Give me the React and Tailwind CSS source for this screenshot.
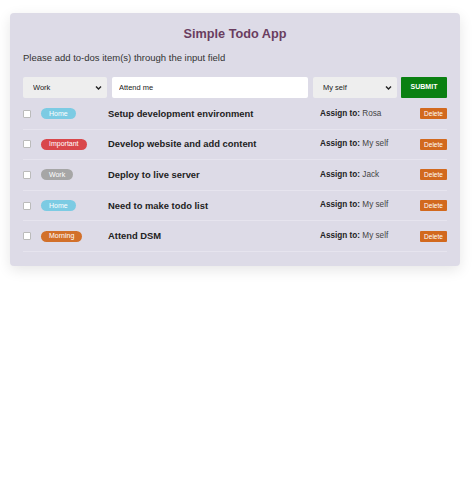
import { useState } from 'react';

const BADGE_STYLES = {
    Home: 'bg-[#7ccbe3]',
    Important: 'bg-[#d9474b]',
    Work: 'bg-[#a6a6a6]',
    Morning: 'bg-[#d2702a]',
};

const TODOS = [
    { id: 1, tag: 'Home', text: 'Setup development environment', assignee: 'Rosa' },
    { id: 2, tag: 'Important', text: 'Develop website and add content', assignee: 'My self' },
    { id: 3, tag: 'Work', text: 'Deploy to live server', assignee: 'Jack' },
    { id: 4, tag: 'Home', text: 'Need to make todo list', assignee: 'My self' },
    { id: 5, tag: 'Morning', text: 'Attend DSM', assignee: 'My self' },
];

function Chevron() {
    return (
        <svg className="pointer-events-none absolute right-[5px] top-1/2 -translate-y-1/2" width="7" height="5" viewBox="0 0 7 5">
            <path d="M1 1l2.5 2.5L6 1" fill="none" stroke="#222" strokeWidth="1.4" />
        </svg>
    );
}

function SelectBox({ value, options, onChange, className }) {
    return (
        <div className={`relative ${className}`}>
            <select
                value={value}
                onChange={(e) => onChange(e.target.value)}
                className="block h-full w-full appearance-none rounded-[2px] bg-[#eeeeee] pl-[10px] text-[7.5px] text-[#222] outline-none"
            >
                {options.map((o) => (
                    <option key={o}>{o}</option>
                ))}
            </select>
            <Chevron />
        </div>
    );
}

function TodoRow({ todo, onDelete }) {
    return (
        <li className="flex h-[30.6px] items-center border-b border-[#e6e4ee]">
            <input type="checkbox" className="block h-[8px] w-[8px] appearance-none rounded-[1px] border border-[#bbb] bg-white" />
            <div className="ml-[10px] flex w-[67px] items-center">
                <span className={`block rounded-full px-[8px] py-[1.5px] text-[7px] leading-[8px] text-white ${BADGE_STYLES[todo.tag]}`}>
                    {todo.tag}
                </span>
            </div>
            <span className="flex-1 text-[9.4px] font-bold text-[#222]">{todo.text}</span>
            <span className="w-[100px] text-[8.2px] text-[#444]">
                <b className="text-[#222]">Assign to:</b> {todo.assignee}
            </span>
            <button
                type="button"
                onClick={() => onDelete(todo.id)}
                className="h-[11px] w-[27px] rounded-[1px] bg-[#d2691e] text-[6.5px] leading-[11px] text-white"
            >
                Delete
            </button>
        </li>
    );
}

export default function App() {
    const [todos, setTodos] = useState(TODOS);
    const [tag, setTag] = useState('Work');
    const [text, setText] = useState('Attend me');
    const [assignee, setAssignee] = useState('My self');

    const handleSubmit = (e) => {
        e.preventDefault();
        if (!text.trim()) return;
        setTodos([...todos, { id: Date.now(), tag, text, assignee }]);
        setText('');
    };

    return (
        <div className="h-[482px] w-[474px] bg-white pt-[13px] pl-[10px]" style={{ fontFamily: '"Liberation Sans", Arial, sans-serif' }}>
            <div className="w-[450px] rounded-[4px] bg-[#dddbe7] px-[13px] pt-[13px] pb-[14px] shadow-[0_4px_14px_rgba(0,0,0,0.10)]">
                <h1 className="text-center text-[12.7px] font-bold leading-[17px] text-[#6a3d5f]">Simple Todo App</h1>
                <p className="mt-[9px] text-[9.5px] leading-[12px] text-[#333]">Please add to-dos item(s) through the input field</p>

                <form onSubmit={handleSubmit} className="mt-[13px] flex h-[21px] items-stretch">
                    <SelectBox value={tag} onChange={setTag} options={['Work', 'Home', 'Important', 'Morning']} className="w-[84px]" />
                    <input
                        value={text}
                        onChange={(e) => setText(e.target.value)}
                        className="ml-[5px] block w-[196px] rounded-[2px] bg-white px-[7px] text-[7.5px] text-[#222] outline-none"
                    />
                    <SelectBox value={assignee} onChange={setAssignee} options={['My self', 'Rosa', 'Jack']} className="ml-[5px] w-[84px]" />
                    <button type="submit" className="ml-[4px] flex-1 rounded-[1px] bg-[#0a8012] text-[7px] font-bold text-white">
                        SUBMIT
                    </button>
                </form>

                <ul className="mt-[1px]">
                    {todos.map((todo) => (
                        <TodoRow key={todo.id} todo={todo} onDelete={(id) => setTodos(todos.filter((t) => t.id !== id))} />
                    ))}
                </ul>
            </div>
        </div>
    );
}
